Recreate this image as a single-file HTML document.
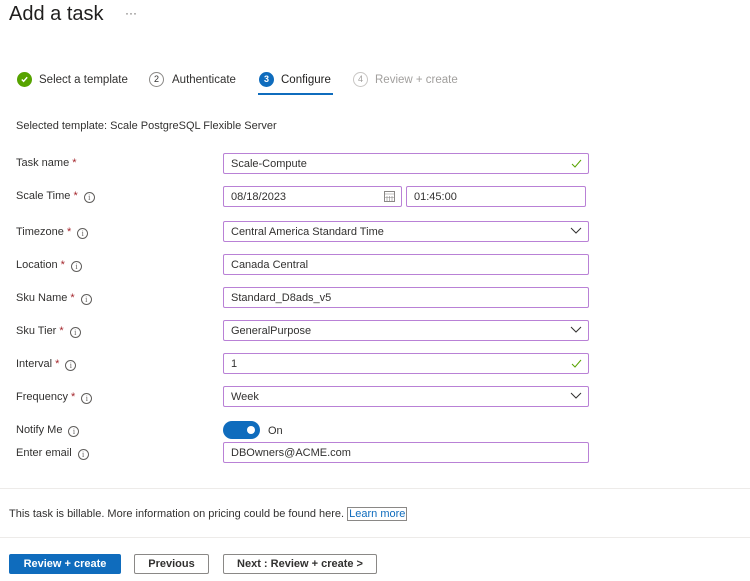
<!DOCTYPE html>
<html><head><style>
*{box-sizing:border-box;margin:0;padding:0}
body{width:750px;height:581px;background:#fff;font-family:"Liberation Sans",sans-serif;font-size:11px;color:#323130;position:relative;overflow:hidden}
.a{position:absolute;white-space:nowrap}
.lbl{position:absolute;left:16px;font-size:11px;line-height:14px}
.req{color:#a4262c}
.info{display:inline-block;width:11px;height:11px;border:1px solid #605e5c;border-radius:50%;font-size:8px;line-height:9px;text-align:center;color:#605e5c;margin-left:6px;vertical-align:-1px;font-family:"Liberation Serif",serif}
.in{position:absolute;height:21px;border:1px solid #b981d6;border-radius:2px;padding-left:7px;padding-top:1px;line-height:19px;font-size:11px;color:#323130}
.chev{position:absolute;right:6px;top:5px}
.step{position:absolute;top:73px;font-size:11.5px;line-height:14px}
.circ{position:absolute;top:72px;width:15px;height:15px;border-radius:50%;border:1px solid #8a8886;font-size:9px;line-height:13px;text-align:center}
.btn{position:absolute;top:554px;height:20px;border:1px solid #8a8886;border-radius:2px;text-align:center;line-height:18px;font-size:11px;font-weight:bold;color:#323130}
</style></head><body>
<div class="a" style="left:9px;top:3px;font-size:20px;color:#201f1e">Add a task</div>
<div class="a" style="left:125px;top:6px;font-size:12px;color:#605e5c">···</div>

<div class="circ" style="left:17px;background:#57a300;border-color:#57a300"><svg width="9" height="9" viewBox="0 0 10 10" style="margin-top:2px"><path d="M2 5l2 2 4-4.5" stroke="#fff" stroke-width="1.6" fill="none"/></svg></div>
<div class="step" style="left:39px">Select a template</div>
<div class="circ" style="left:149px">2</div>
<div class="step" style="left:172px">Authenticate</div>
<div class="circ" style="left:259px;background:#0f6cbd;border-color:#0f6cbd;color:#fff;font-weight:bold">3</div>
<div class="step" style="left:281px;color:#201f1e">Configure</div>
<div class="a" style="left:258px;top:93px;width:75px;height:2px;background:#0f6cbd"></div>
<div class="circ" style="left:353px;border-color:#c8c6c4;color:#a19f9d">4</div>
<div class="step" style="left:375px;color:#a19f9d">Review + create</div>

<div class="a" style="left:16px;top:118px;line-height:16px">Selected template: Scale PostgreSQL Flexible Server</div>

<div class="lbl" style="top:156px">Task name <span class="req">*</span></div>
<div class="in" style="left:223px;top:153px;width:366px">Scale-Compute<svg class="chev" width="11" height="9" viewBox="0 0 11 9"><path d="M1 5l3 3 6-7" stroke="#57a300" fill="none"/></svg></div>

<div class="lbl" style="top:189px">Scale Time <span class="req">*</span><span class="info">i</span></div>
<div class="in" style="left:223px;top:186px;width:179px">08/18/2023<svg class="chev" style="top:4px" width="11" height="11" viewBox="0 0 11 11"><rect x="0.5" y="0.5" width="10" height="10" fill="none" stroke="#8a8886"/><path d="M0.5 3h10M3 5v5M5.5 5v5M8 5v5M0.5 6.5h10" stroke="#8a8886" stroke-width=".6"/></svg></div>
<div class="in" style="left:406px;top:186px;width:180px">01:45:00</div>

<div class="lbl" style="top:225px">Timezone <span class="req">*</span><span class="info">i</span></div>
<div class="in" style="left:223px;top:221px;width:366px">Central America Standard Time<svg class="chev" width="12" height="8" viewBox="0 0 12 8"><path d="M1 1l5 5 5-5" stroke="#323130" fill="none"/></svg></div>

<div class="lbl" style="top:258px">Location <span class="req">*</span><span class="info">i</span></div>
<div class="in" style="left:223px;top:254px;width:366px">Canada Central</div>

<div class="lbl" style="top:291px">Sku Name <span class="req">*</span><span class="info">i</span></div>
<div class="in" style="left:223px;top:287px;width:366px">Standard_D8ads_v5</div>

<div class="lbl" style="top:324px">Sku Tier <span class="req">*</span><span class="info">i</span></div>
<div class="in" style="left:223px;top:320px;width:366px">GeneralPurpose<svg class="chev" width="12" height="8" viewBox="0 0 12 8"><path d="M1 1l5 5 5-5" stroke="#323130" fill="none"/></svg></div>

<div class="lbl" style="top:357px">Interval <span class="req">*</span><span class="info">i</span></div>
<div class="in" style="left:223px;top:353px;width:366px">1<svg class="chev" width="11" height="9" viewBox="0 0 11 9"><path d="M1 5l3 3 6-7" stroke="#57a300" fill="none"/></svg></div>

<div class="lbl" style="top:390px">Frequency <span class="req">*</span><span class="info">i</span></div>
<div class="in" style="left:223px;top:386px;width:366px">Week<svg class="chev" width="12" height="8" viewBox="0 0 12 8"><path d="M1 1l5 5 5-5" stroke="#323130" fill="none"/></svg></div>

<div class="lbl" style="top:423px">Notify Me<span class="info">i</span></div>
<div class="a" style="left:223px;top:421px;width:37px;height:18px;border-radius:9px;background:#0f6cbd"><div style="position:absolute;right:5px;top:5px;width:8px;height:8px;border-radius:50%;background:#fff"></div></div>
<div class="a" style="left:268px;top:423px;line-height:16px">On</div>

<div class="lbl" style="top:446px">Enter email<span class="info">i</span></div>
<div class="in" style="left:223px;top:442px;width:366px">DBOwners@ACME.com</div>

<div class="a" style="left:0;top:488px;width:750px;height:1px;background:#edebe9"></div>
<div class="a" style="left:9px;top:506px;line-height:16px">This task is billable. More information on pricing could be found here. <span style="color:#0f6cbd;border:1px solid #8a8886;padding:0 1px">Learn more</span></div>
<div class="a" style="left:0;top:537px;width:750px;height:1px;background:#edebe9"></div>

<div class="btn" style="left:9px;width:112px;background:#0f6cbd;border-color:#0f6cbd;color:#fff">Review + create</div>
<div class="btn" style="left:134px;width:75px">Previous</div>
<div class="btn" style="left:223px;width:154px">Next : Review + create &gt;</div>
</body></html>
